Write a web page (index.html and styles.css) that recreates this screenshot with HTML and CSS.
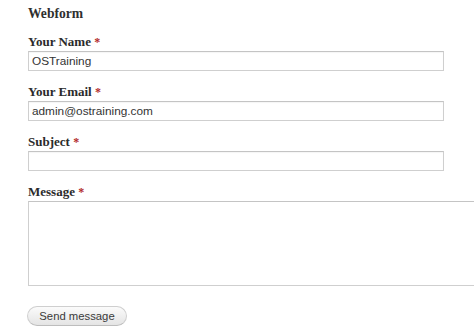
FILE: index.html
```html
<!DOCTYPE html>
<html>
<head>
<meta charset="utf-8">
<link rel="stylesheet" href="styles.css">
</head>
<body>
<div class="page">
  <h2 class="title">Webform</h2>
  <form class="webform">
    <div class="field">
      <label class="label">Your Name <span class="req">*</span></label>
      <input class="text" type="text" value="OSTraining">
    </div>
    <div class="field">
      <label class="label">Your Email <span class="req">*</span></label>
      <input class="text" type="text" value="admin@ostraining.com">
    </div>
    <div class="field">
      <label class="label">Subject <span class="req">*</span></label>
      <input class="text" type="text" value="">
    </div>
    <div class="field">
      <label class="label">Message <span class="req">*</span></label>
      <div class="clip">
        <textarea class="area"></textarea>
      </div>
    </div>
    <div class="actions">
      <button class="btn" type="button">Send message</button>
    </div>
  </form>
</div>
</body>
</html>
```
FILE: styles.css
```css
html, body {
  margin: 0;
  padding: 0;
  background: #ffffff;
  overflow: hidden;
}
.page {
  padding: 6px 0 0 28px;
}
.title {
  margin: 0 0 12px 0;
  font-family: "Liberation Serif", "Times New Roman", serif;
  font-weight: bold;
  font-size: 13.6px;
  line-height: 16px;
  color: #2f2f2f;
}
.webform {
  margin: 0;
}
.field {
  margin-bottom: 13px;
}
.label {
  display: block;
  margin-bottom: 1px;
  font-family: "Liberation Serif", "Times New Roman", serif;
  font-weight: bold;
  font-size: 13px;
  line-height: 16px;
  color: #2b2b2b;
}
.req {
  color: #b22a2a;
  font-size: 12px;
}
.text {
  display: block;
  box-sizing: border-box;
  width: 416px;
  height: 20px;
  margin: 0;
  padding: 0 3px;
  border: 1px solid #cfcfcf;
  border-top-color: #c4c4c4;
  box-shadow: inset 0 1px 1px rgba(0,0,0,0.04);
  font-family: "Liberation Sans", Arial, sans-serif;
  font-size: 11.8px;
  color: #333333;
  background: #ffffff;
  outline: none;
}
.clip {
  overflow: hidden;
  width: 446px;
}
.area {
  display: block;
  box-sizing: border-box;
  width: 470px;
  height: 85px;
  margin: 0;
  padding: 3px;
  border: 1px solid #cfcfcf;
  border-top-color: #c4c4c4;
  resize: none;
  font-family: "Liberation Sans", Arial, sans-serif;
  font-size: 12px;
  background: #ffffff;
  outline: none;
}
.actions {
  padding-top: 7px;
}
.btn {
  box-sizing: border-box;
  width: 100px;
  height: 20px;
  margin: 0 0 0 -1px;
  padding: 0;
  border: 1px solid #cfcfcf;
  border-bottom-color: #bdbdbd;
  border-radius: 10px;
  background: linear-gradient(#fbfbfb, #e4e4e4);
  font-family: "Liberation Sans", Arial, sans-serif;
  font-size: 11.3px;
  color: #3a3a3a;
  line-height: 18px;
}
```
